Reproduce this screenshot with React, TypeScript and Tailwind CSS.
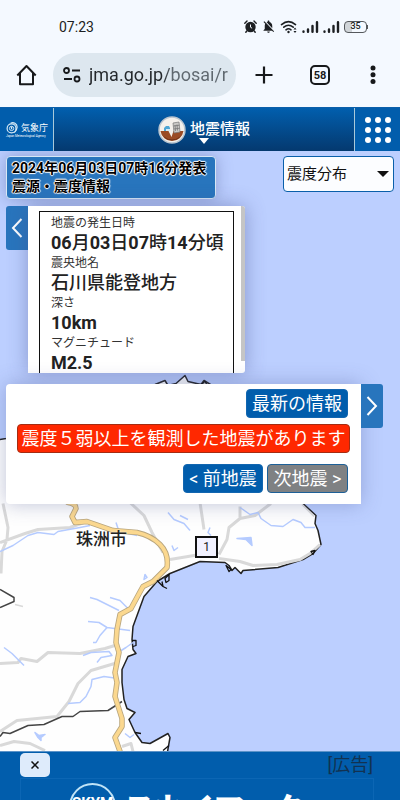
import React from "react";
import { MdNotificationsOff } from "react-icons/md";

function StatusBar() {
  return (
    <div className="flex h-[53px] items-center justify-between pr-[32px] pl-[59px] text-[#1c1f22]">
      <time className="text-[14px] leading-4">07:23</time>
      <div className="flex items-center gap-[4px]">
        <svg className="h-[13px] w-[13px]" viewBox="0 0 13 13" aria-label="アラーム">
          <circle cx="6.5" cy="7" r="5.2" fill="currentColor" />
          <path d="M.8 3.200 3 1M12.200 3.200 10 1M2.800 11l-1 1.300M10.200 11l1 1.300" stroke="currentColor" strokeWidth="1.400" strokeLinecap="round" />
          <path d="M6.500 4.500v2.700l1.600 1" stroke="#f4f9ff" strokeWidth="1" fill="none" />
        </svg>
        <MdNotificationsOff className="h-[15px] w-[15px]" />
        <svg className="h-[14px] w-[18px]" viewBox="0 0 18 14" fill="none" stroke="currentColor" strokeLinecap="round">
          <path d="M1.500 4.600Q8.500-1.400 15.500 4.600M3.800 7.200q4.700-3.900 9.400 0M6 9.800q2.500-2 5 0" strokeWidth="1.600" />
          <circle cx="8.500" cy="12" r="1.200" fill="currentColor" stroke="none" />
          <path d="m13.500 9.500 1.500-2 1.500 2zM13.500 11l1.500 2 1.500-2z" fill="currentColor" stroke="none" />
        </svg>
        {[0, 1].map((n) => (
          <svg key={n} className="h-[12px] w-[17px]" viewBox="0 0 17 12" stroke="currentColor" strokeLinecap="round" strokeWidth="2.400">
            <path d="M1.500 10.500V10.700M6 8.500v2.200M10.500 5v5.700M15 1.300v9.400" />
          </svg>
        ))}
        <div className="flex items-center">
          <span className="flex h-[12px] w-[23px] items-center justify-center rounded-[4px] border border-[#55595d] bg-linear-to-r from-[#d0d5d9] from-35% to-transparent to-35% text-[9px] leading-none font-medium">35</span>
          <span className="h-[4px] w-px bg-[#55595d]" />
        </div>
      </div>
    </div>
  );
}

function BrowserBar() {
  return (
    <div className="flex h-[54px] items-start pr-[17px] pl-[16px] text-[#17191b]">
      <button aria-label="ホーム" className="mt-[11px] mr-[16px]">
        <svg className="h-[22px] w-[21px]" viewBox="0 0 21 22" fill="none" stroke="currentColor" strokeWidth="2">
          <path d="M1.300 11.500 10.500 2l9.200 9.500M4 9v11.300h13V9" strokeLinejoin="round" />
        </svg>
      </button>
      <div className="flex h-[44px] min-w-0 flex-1 items-center rounded-full bg-[#dde7ef] pl-[10px]">
        <svg className="mr-[8px] h-[16px] w-[18px] shrink-0" viewBox="0 0 18 16" fill="none" stroke="currentColor" strokeWidth="1.800">
          <circle cx="3.500" cy="3.500" r="2.500" />
          <path d="M9 3.500h8M1 12h8" />
          <circle cx="14" cy="12" r="2.500" />
        </svg>
        <input
          aria-label="アドレス"
          className="w-full min-w-0 bg-linear-to-r from-[#23272b] from-50% to-[#5f686f] to-56% bg-clip-text text-[18px] leading-6 text-transparent outline-none"
          defaultValue="jma.go.jp/bosai/r"
        />
      </div>
      <button aria-label="新しいタブ" className="mt-[13px] ml-[19px]">
        <svg className="h-[18px] w-[18px]" viewBox="0 0 18 18" stroke="currentColor" strokeWidth="2.200">
          <path d="M9 0.500v17M0.500 9h17" />
        </svg>
      </button>
      <button aria-label="タブ一覧" className="mt-[12px] ml-[37px] flex h-[20px] w-[20px] items-center justify-center rounded-[5px] border-2 border-current text-[11px] leading-none font-bold">
        58
      </button>
      <button aria-label="メニュー" className="mt-[12px] ml-[33px]">
        <svg className="h-[20px] w-[20px]" viewBox="0 0 20 20" fill="currentColor">
          <circle cx="10" cy="3" r="2.500" />
          <circle cx="10" cy="9.800" r="2.500" />
          <circle cx="10" cy="16.500" r="2.500" />
        </svg>
      </button>
    </div>
  );
}

function SiteHeader() {
  return (
    <header className="flex h-[44px] border-t border-[#0a5faa] bg-linear-to-b from-[#015fae] to-[#04396f] text-white">
      <a href="#top" className="flex w-[54px] flex-col items-start justify-center border-r border-[#a9c9da] bg-[#015dac] pl-[6px]">
        <span className="flex items-center gap-[2px]">
          <svg className="h-[13px] w-[13px] shrink-0" viewBox="0 0 14 14" fill="none" stroke="#d5e8f5">
            <circle cx="6" cy="8" r="4.800" strokeWidth="1.300" />
            <circle cx="6" cy="8" r="2.300" />
            <path d="M5 2.500C8 0.500 12 3 12 6.500c0 3-1.500 4.500-3 6M6 6v3" strokeWidth="1.300" />
          </svg>
          <span className="text-[9px] leading-[12px] whitespace-nowrap">気象庁</span>
        </span>
        <span className="text-[3px] leading-[4px] whitespace-nowrap">Japan Meteorological Agency</span>
      </a>
      <div className="flex min-w-0 flex-1 flex-col items-center">
        <button className="relative flex h-full items-center gap-[4px]">
          <svg className="h-[28px] w-[28px]" viewBox="0 0 28 28">
            <circle cx="14" cy="14" r="13" fill="#f4f1ec" stroke="#b8c4cf" strokeWidth="1.500" />
            <path d="M2.500 15h8l3 6 2-6H25.500a11.600 11.600 0 0 1-23 0z" fill="#9a4b25" />
            <path d="M5 20q9 7 18 0a11.600 11.600 0 0 1-18 0z" fill="#6a2e17" />
            <path d="m15 7 6-1 1 10-6 1z" fill="#cac9c6" stroke="#777" strokeWidth="0.700" />
            <path d="m17 9 .5 6M19 8.500l.5 6M15.500 10l6-.8M15.800 13l6-.8" stroke="#777" strokeWidth="0.800" />
            <path d="m6 12 2-2h3l1 2v3H6z" fill="#4ea6d4" />
            <path d="M8 15h4v-2H8z" fill="#d9ecf5" />
          </svg>
          <span className="pb-[2px] text-[15px] leading-5 font-medium">地震情報</span>
          <span className="absolute bottom-[7px] left-1/2 h-0 w-0 -translate-x-1/2 border-x-[5px] border-t-[6px] border-x-transparent border-t-white" />
        </button>
      </div>
      <button aria-label="一覧" className="flex w-[46px] items-center justify-center border-l border-[#a9c9da] bg-[#015dac]">
        <span className="grid grid-cols-3 gap-[4px]">
          {[0, 1, 2, 3, 4, 5, 6, 7, 8].map((n) => (
            <span key={n} className="h-[6px] w-[6px] rounded-full bg-white" />
          ))}
        </span>
      </button>
    </header>
  );
}

const coastRoad =
  "M68 503Q76 504 76 509L72 517 75 523 87 522 113 531 137 533Q151 536 160 545T167 568L153 582 143 587Q138 596 131 609L120 615 117 630 116 643 119 653 115 673 117 683 115 697 122 719 122 727 115 738 120 752";

function CoastMap() {
  return (
    <svg className="absolute inset-0 h-full w-full" viewBox="0 151 400 601" preserveAspectRatio="xMidYMid slice" fill="none" strokeLinejoin="round">
      <path
        d="M-5 441 6 439 60 420 155 385 165 381 168 386 176 384 185 376 188 382 201 385 204 381 212 386 290 490 303 504 316 516 315 524 318 531 321 545 313 554 303 560 278 568 243 571 241 574 235 568 232 571 229 566 225 563 200 562 170 574 157 582 144 597 133 627 132 640 133 650 136 654 128 657 122 670 122 683 124 700 127 709 135 713 129 720 135 733 142 743 150 744 168 734 170 738 167 755H-5z"
        fill="#fefefe"
        stroke="#222"
        strokeWidth="1.500"
      />
      <g stroke="#d9d9d9" strokeWidth="3">
        <path d="M3 504 8 528 7 540 2 552 1 574M0 543 25 534 38 530 70 528 84 523M130 503 144 516 152 533 163 553M170 560 200 555M240 507 240 519 229 528 227 540 219 555M200 503 204 530M240 519 255 516 271 504M219 559 240 562 253 566 277 565 300 560 310 554 320 545" />
        <path d="M0 664 18 663 21 659 37 662 48 653 80 654 105 649 118 645M118 663 91 671 78 684 69 702 57 717 17 721 0 732M0 746 14 742 30 744 45 751M122 747 131 744 133 752" />
        <path d="M302 505 314 517M15 605 23 607" strokeWidth="1.500" />
      </g>
      <g stroke="#b5cbff" strokeWidth="1.500">
        <path d="M0 552 13 546 28 536 38 533 54 535 58 532 80 528 90 526M116 523 119 532 137 536M168 513 174 520 184 524 190 531M180 516 188 520M90 598 97 600 107 605 119 611M110 598 120 601 130 611M88 622 99 623 107 628 130 631M107 628 100 636 96 643 93 643" />
        <path d="M4 648 12 654 20 662 24 666M83 656 91 653 109 652 112 656 101 658 97 663M118 653 126 648 133 643M68 704 80 703 86 697 91 687 92 680 104 677 118 679M125 734 130 738 134 735" />
        <path d="M240 508 250 515 258 513 261 519 271 526 283 527 293 520 301 523 305 528 315 528M210 528 208 533 211 536M145 575 144 580 147 578zM172 546 174 551 178 548" />
        <path d="m237 539 14-1 1 8-6-6zM35 733l4 3 6-1-4 3v3l-3-3z" fill="#b5cbff" />
      </g>
      <path d="M0 590 14 598 14 602 0 608M0 737 3 733 10 734 28 726 44 725 62 717 73 717 80 712 108 711 122 702" stroke="#444" strokeWidth="1.500" />
      <g strokeLinecap="round">
        <path d={coastRoad} stroke="#b9a67e" strokeWidth="5.500" />
        <path d={coastRoad} stroke="#fbd88f" strokeWidth="3.800" />
      </g>
      <path d="m165 579 4-4v6l-3 2zM157 581l6 6 4 2M163 587l-1-5M226 566l5 4-2 2zM311 552l4-1-2 4zM132 641h4v5l-3 1M135 733l6 1M163 751l6-5M201 385l4-3 2 3z" stroke="#111" strokeWidth="1.300" />
    </svg>
  );
}

const details: [string, React.ReactNode][] = [
  ["地震の発生日時", <><b>06</b>月<b>03</b>日<b>07</b>時<b>14</b>分頃</>],
  ["震央地名", "石川県能登地方"],
  ["深さ", <b>10km</b>],
  ["マグニチュード", <b>M2.5</b>],
];

function InfoCard() {
  return (
    <section className="mt-[7px] flex items-start">
      <button aria-label="閉じる" className="flex h-[44px] w-[22px] items-center justify-center rounded-l-[3px] bg-[#2875bd]">
        <svg className="h-[20px] w-[12px]" viewBox="0 0 12 20" fill="none" stroke="#fff" strokeWidth="2"><path d="M10.500 1 2 10l8.500 9" /></svg>
      </button>
      <div className="flex h-[167px] w-[217px] overflow-hidden rounded-r-[3px] bg-white shadow-[0_0_20px_rgba(70,80,140,0.45)]">
        <dl className="mt-[5px] ml-[11px] h-[240px] w-[195px] border border-[#111] pt-px pl-[11px] text-[#222]">
          {details.map(([label, value]) => (
            <React.Fragment key={label}>
              <dt className="text-[12px] leading-[20px] text-[#333]">{label}</dt>
              <dd className="text-[18px] leading-[20px] font-medium whitespace-nowrap">{value}</dd>
            </React.Fragment>
          ))}
        </dl>
        <span className="ml-auto h-[155px] w-[4px] bg-[#c5c5c5]" />
      </div>
    </section>
  );
}

function ControlPanel() {
  return (
    <section className="mt-[11px] flex items-start">
      <div className="flex h-[120px] max-w-[355px] flex-1 flex-col rounded-l-[4px] bg-white px-[11px] pt-[5px] text-[18px] leading-[27px] whitespace-nowrap text-white shadow-[0_0_20px_rgba(70,80,140,0.35)]">
        <button className="mr-[2px] self-end rounded-[4px] border border-[#1266b0] bg-[#015dac] px-[5px]">最新の情報</button>
        <button className="mt-[6px] rounded-[4px] border border-[#a52c12] bg-[#ff2800]">震度５弱以上を観測した地震があります</button>
        <div className="mt-[11px] mr-[2px] flex justify-end gap-[4px]">
          <button className="w-[80px] rounded-[4px] border border-[#1266b0] bg-[#015dac]">&lt; 前地震</button>
          <button className="w-[81px] rounded-[4px] border border-[#1d6098] bg-[#7f8183]">次地震 &gt;</button>
        </div>
      </div>
      <button aria-label="開く" className="flex h-[44px] w-[22px] items-center justify-center rounded-r-[3px] bg-[#2875bd]">
        <svg className="h-[20px] w-[12px]" viewBox="0 0 12 20" fill="none" stroke="#fff" strokeWidth="2"><path d="M1.500 1 10 10l-8.500 9" /></svg>
      </button>
    </section>
  );
}

function AdBanner() {
  return (
    <aside className="h-[49px] overflow-hidden border-t border-[#5c93c8] bg-[#015dac] px-[20px]">
      <div className="flex h-[26px] items-center justify-between">
        <button aria-label="広告を閉じる" className="flex h-[24px] w-[30px] items-center justify-center rounded-[5px] bg-[#deebfb]">
          <svg className="h-[8px] w-[8px]" viewBox="0 0 8 8" stroke="#111" strokeWidth="1.500"><path d="m.5.5 7 7M7.500.5l-7 7" /></svg>
        </button>
        <span className="mr-[7px] text-[18px] leading-6 text-[#123251]">[広告]</span>
      </div>
      <a href="#ad" className="mr-[6px] flex h-[60px] items-start border border-[#0c66b4] pl-[48px] text-white">
        <span className="mt-[4px] flex h-[47px] w-[47px] shrink-0 items-start justify-center rounded-full border-2 border-[#bfe3f7] pt-[9px] text-[15px] leading-[18px] font-bold">SKYM</span>
        <span className="mt-[12px] ml-[8px] text-[30px] leading-9 font-black whitespace-nowrap">スカイマーク</span>
      </a>
    </aside>
  );
}

export default function App() {
  return (
    <div className="flex min-h-screen flex-col bg-[#f4f9ff] font-['Roboto','Noto_Sans_CJK_JP',sans-serif]">
      <StatusBar />
      <BrowserBar />
      <SiteHeader />
      <main className="relative flex-1 overflow-hidden bg-[#bccfff]">
        <CoastMap />
        <span className="absolute top-[376px] left-[76px] text-[17px] leading-6 font-medium text-[#222] [text-shadow:0_0_2px_#fff]">珠洲市</span>
        <span className="absolute top-[385px] left-[195px] flex h-[22px] w-[23px] items-center justify-center border-2 border-[#111] bg-[#f2f2ff] text-[12px] leading-none text-[#222]">1</span>
        <div className="relative px-[6px] pt-[5px]">
          <div className="flex items-start justify-between">
            <h1 className="h-[43px] w-[210px] rounded-[4px] border border-[#d7e7f5] bg-[#2875bd] pt-[2px] pl-[5px] text-[14px] leading-[18px] font-bold whitespace-nowrap text-black shadow-[0_0_16px_rgba(70,80,140,0.4)] [text-shadow:0_0_1px_#fff,0_0_1px_#fff,1px_0_1px_#fff,-1px_0_1px_#fff,0_1px_1px_#fff,0_-1px_1px_#fff]">
              2024年06月03日07時16分発表
              <br />
              震源・震度情報
            </h1>
            <div className="relative">
              <select aria-label="表示内容" className="h-[36px] w-[111px] appearance-none rounded-[4px] border border-[#0a5faa] bg-[#fcfdff] pl-[3px] text-[15px] text-[#111]">
                <option>震度分布</option>
              </select>
              <span className="pointer-events-none absolute top-[15px] right-[5px] h-0 w-0 border-x-[6px] border-t-[6px] border-x-transparent border-t-[#111]" />
            </div>
          </div>
          <InfoCard />
          <ControlPanel />
        </div>
      </main>
      <AdBanner />
    </div>
  );
}
